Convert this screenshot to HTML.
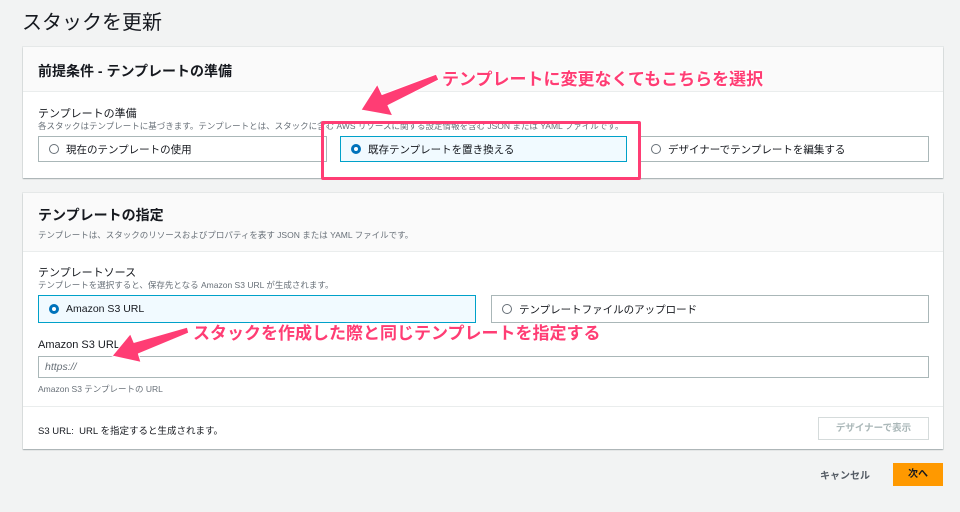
<!DOCTYPE html>
<html><head><meta charset="utf-8"><style>
*{box-sizing:border-box;margin:0;padding:0}
body{width:960px;height:512px;background:#f2f3f3;font-family:"Liberation Sans","Noto Sans CJK JP",sans-serif;color:#16191f;position:relative;overflow:hidden}
.a{position:absolute}
.panel{position:absolute;left:23px;width:920px;background:#fff;box-shadow:0 1px 1px rgba(0,28,36,.3),0 0 0 1px #e5e8e8}
.hdr{background:#fafafa;border-bottom:1px solid #eaeded}
.h{font-size:14px;font-weight:bold}
.lbl{font-size:11px;color:#16191f}
.desc{font-size:8.5px;color:#687078;white-space:nowrap}
.tile{position:absolute;border:1px solid #aab7b8;background:#fff;font-size:10.5px;display:flex;align-items:center;padding-left:10px}
.tile.sel{background:#f1faff;border-color:#00a1c9}
.r{width:10px;height:10px;border:1px solid #687078;border-radius:50%;margin-right:7px;background:#fff}
.sel .r{border:3px solid #0073bb}
.pink{color:#ff3d74;font-weight:bold;font-size:17px;white-space:nowrap;text-shadow:0 0 2px #fff,1px 1px 2px #fff,-1px -1px 2px #fff}
</style></head><body>
<div class="a" style="left:22px;top:6px;font-size:20px;color:#16191f">スタックを更新</div>

<div class="panel" style="top:47px;height:131px">
 <div class="hdr" style="height:45px;padding:14px 0 0 15px"><div class="h">前提条件 - テンプレートの準備</div></div>
 <div class="a lbl" style="left:15px;top:58px">テンプレートの準備</div>
 <div class="a desc" style="left:15px;top:73px">各スタックはテンプレートに基づきます。テンプレートとは、スタックに含む AWS リソースに関する設定情報を含む JSON または YAML ファイルです。</div>
 <div class="tile" style="left:15px;top:89px;width:289px;height:26px"><span class="r"></span>現在のテンプレートの使用</div>
 <div class="tile sel" style="left:317px;top:89px;width:287px;height:26px"><span class="r"></span>既存テンプレートを置き換える</div>
 <div class="tile" style="left:617px;top:89px;width:289px;height:26px"><span class="r"></span>デザイナーでテンプレートを編集する</div>
</div>
<div class="a" style="left:321px;top:121px;width:320px;height:59px;border:3px solid #ff3d74;border-radius:2px"></div>

<div class="panel" style="top:193px;height:256px">
 <div class="hdr" style="height:59px;padding:12px 0 0 15px"><div class="h">テンプレートの指定</div><div class="desc" style="margin-top:4px">テンプレートは、スタックのリソースおよびプロパティを表す JSON または YAML ファイルです。</div></div>
 <div class="a lbl" style="left:15px;top:71px">テンプレートソース</div>
 <div class="a desc" style="left:15px;top:86px">テンプレートを選択すると、保存先となる Amazon S3 URL が生成されます。</div>
 <div class="tile sel" style="left:15px;top:102px;width:438px;height:28px"><span class="r"></span>Amazon S3 URL</div>
 <div class="tile" style="left:468px;top:102px;width:438px;height:28px"><span class="r"></span>テンプレートファイルのアップロード</div>
 <div class="a lbl" style="left:15px;top:146px">Amazon S3 URL</div>
 <div class="a" style="left:15px;top:163px;width:891px;height:22px;border:1px solid #aab7b8;font-size:10.5px;font-style:italic;color:#687078;padding:4px 6px">https://</div>
 <div class="a desc" style="left:15px;top:190px">Amazon S3 テンプレートの URL</div>
 <div class="a" style="left:0;top:213px;width:920px;border-top:1px solid #eaeded"></div>
 <div class="a" style="left:15px;top:230px;font-size:9.5px">S3 URL:&nbsp;&nbsp;URL を指定すると生成されます。</div>
 <div class="a" style="left:795px;top:224px;width:111px;height:23px;border:1px solid #d5dbdb;font-size:9.5px;font-weight:bold;color:#aab7b8;text-align:center;line-height:21px">デザイナーで表示</div>
</div>

<div class="a" style="left:820px;top:467px;font-size:10px;font-weight:bold;color:#545b64">キャンセル</div>
<div class="a" style="left:893px;top:463px;width:50px;height:23px;background:#ff9900;font-size:10px;font-weight:bold;text-align:center;line-height:23px">次へ</div>

<svg class="a" style="left:0;top:0" width="960" height="512">
 <g fill="#ff3d74" stroke="#fff" stroke-width="1" stroke-linejoin="round">
  <path d="M436.2 74.2 L438.8 79.8 L388 105.5 L392.7 115.7 L361 110 L377.3 84.3 L382 94.5 Z"/>
  <path d="M187.3 327.1 L188.7 332.9 L138.4 353.8 L141 362.4 L112 356 L130.4 333.8 L134 342.4 Z"/>
 </g>
</svg>
<div class="a pink" style="left:442px;top:65px">テンプレートに変更なくてもこちらを選択</div>
<div class="a pink" style="left:193px;top:319px">スタックを作成した際と同じテンプレートを指定する</div>
</body></html>
